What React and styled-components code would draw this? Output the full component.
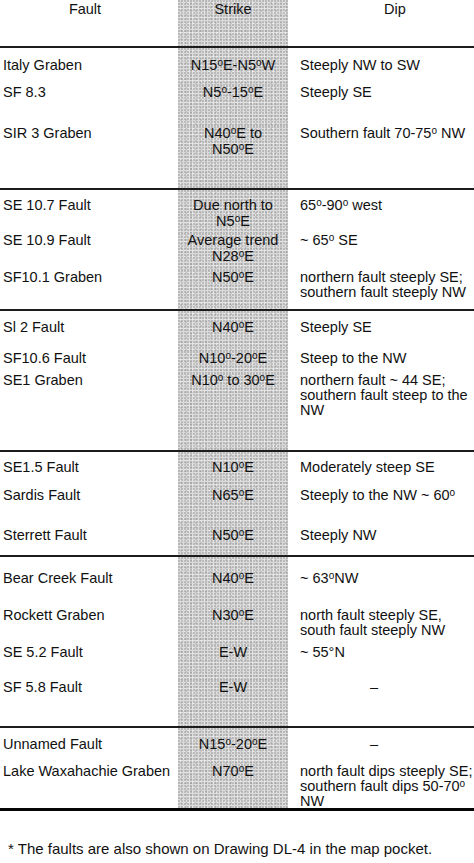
import React from 'react';
import styled, { createGlobalStyle } from 'styled-components';

const GlobalStyle = createGlobalStyle`
  html, body {
    margin: 0;
    padding: 0;
    background: #fff;
  }
  body {
    font-family: "Liberation Sans", Arial, Helvetica, sans-serif;
    color: #111;
  }
`;

// faults grouped the way the printed table separates them with rules
const groups = [
  {
    pt: 9.5,
    rows: [
      { h: 27, fault: 'Italy Graben', strike: ['N15^E-N5^W'], dip: ['Steeply NW to SW'] },
      { h: 41, fault: 'SF 8.3', strike: ['N5^-15^E'], dip: ['Steeply SE'] },
      { h: 62.5, fault: 'SIR 3 Graben', strike: ['N40^E to', 'N50^E'], dip: ['Southern fault 70-75^ NW'] },
    ],
  },
  {
    pt: 7.5,
    rows: [
      { h: 35, fault: 'SE 10.7 Fault', strike: ['Due north to', 'N5^E'], dip: ['65^-90^ west'] },
      { h: 37, fault: 'SE 10.9 Fault', strike: ['Average trend', 'N28^E'], dip: ['~ 65^ SE'] },
      {
        h: 39.5,
        fault: 'SF10.1 Graben',
        strike: ['N50^E'],
        dip: ['northern fault steeply SE;', 'southern fault steeply NW'],
      },
    ],
  },
  {
    pt: 8.5,
    rows: [
      { h: 31, fault: 'Sl 2 Fault', strike: ['N40^E'], dip: ['Steeply SE'] },
      { h: 22, fault: 'SF10.6 Fault', strike: ['N10^-20^E'], dip: ['Steep to the NW'] },
      {
        h: 77.5,
        fault: 'SE1 Graben',
        strike: ['N10^ to 30^E'],
        dip: ['northern fault ~ 44 SE;', 'southern fault steep to the', 'NW'],
      },
    ],
  },
  {
    pt: 7.5,
    rows: [
      { h: 28, fault: 'SE1.5  Fault', strike: ['N10^E'], dip: ['Moderately steep SE'] },
      { h: 40, fault: 'Sardis Fault', strike: ['N65^E'], dip: ['Steeply to the NW  ~ 60^'] },
      { h: 27.5, fault: 'Sterrett Fault', strike: ['N50^E'], dip: ['Steeply NW'] },
    ],
  },
  {
    pt: 13.5,
    rows: [
      { h: 37, fault: 'Bear Creek Fault', strike: ['N40^E'], dip: ['~ 63^NW'] },
      {
        h: 37,
        fault: 'Rockett Graben',
        strike: ['N30^E'],
        dip: ['north fault steeply SE,', 'south fault steeply NW'],
      },
      { h: 35, fault: 'SE 5.2 Fault', strike: ['E-W'], dip: ['~ 55°N'] },
      { h: 46.5, fault: 'SF 5.8 Fault', strike: ['E-W'], dash: true },
    ],
  },
  {
    pt: 8.5,
    rows: [
      { h: 27, fault: 'Unnamed Fault', strike: ['N15^-20^E'], dash: true },
      {
        h: 44.5,
        fault: 'Lake Waxahachie Graben',
        strike: ['N70^E'],
        dip: ['north fault dips steeply SE;', 'southern fault dips 50-70^', 'NW'],
      },
    ],
  },
];

// "^" marks the raised small "o" the print uses for degrees
const fmt = (text) =>
  text.split('^').map((part, i, all) => (
    <React.Fragment key={i}>
      {part}
      {i < all.length - 1 && <Deg>o</Deg>}
    </React.Fragment>
  ));

const App = () => {
  return (
    <Page>
      <GlobalStyle />
      <Table>
        <Row $h={46}>
          <HeadCell $pt={2} $pr={8}>Fault</HeadCell>
          <StrikeCell $pt={2}>Strike</StrikeCell>
          <HeadCell $pt={2} $pl={28}>Dip</HeadCell>
        </Row>
        <Rule $w={2} />
        {groups.map((group, gi) => (
          <React.Fragment key={gi}>
            {group.rows.map((row, ri) => {
              const pt = ri === 0 ? group.pt : 0;
              return (
                <Row key={row.fault} $h={row.h + pt}>
                  <FaultCell $pt={pt}>{row.fault}</FaultCell>
                  <StrikeCell $pt={pt}>
                    {row.strike.map((line) => (
                      <StrikeLine key={line}>{fmt(line)}</StrikeLine>
                    ))}
                  </StrikeCell>
                  <DipCell $pt={pt}>
                    {row.dash ? (
                      <Dash>–</Dash>
                    ) : (
                      row.dip.map((line) => <Line key={line}>{fmt(line)}</Line>)
                    )}
                  </DipCell>
                </Row>
              );
            })}
            <Rule $w={gi === groups.length - 1 ? 3 : 2} $dark={gi === groups.length - 1} />
          </React.Fragment>
        ))}
      </Table>
      <Footnote>* The faults are also shown on Drawing DL-4 in the map pocket.</Footnote>
    </Page>
  );
};

const Page = styled.div`
  width: 474px;
  height: 863px;
  overflow: hidden;
  font-size: 14.5px;
  line-height: 15px;
`;

const Table = styled.div`
  display: flex;
  flex-direction: column;
`;

const Row = styled.div`
  display: grid;
  grid-template-columns: 178px 110px 1fr;
  height: ${(p) => p.$h}px;
`;

const Cell = styled.div`
  padding-top: ${(p) => p.$pt || 0}px;
  white-space: nowrap;
`;

const HeadCell = styled(Cell)`
  text-align: center;
  padding-left: ${(p) => p.$pl || 0}px;
  padding-right: ${(p) => p.$pr || 0}px;
`;

const FaultCell = styled(Cell)`
  padding-left: 3px;
  overflow: hidden;
`;

// halftone screen of the printed strike column
const StrikeCell = styled(Cell)`
  text-align: center;
  background-color: #dcdcdc;
  background-image:
    radial-gradient(circle at 1px 1px, rgba(95, 95, 95, 0.38) 0.6px, transparent 1px),
    radial-gradient(circle at 2px 1px, rgba(140, 140, 140, 0.3) 0.7px, transparent 1.1px),
    radial-gradient(circle at 1px 2px, rgba(250, 250, 250, 0.6) 0.6px, transparent 1px);
  background-size: 3px 3px, 5px 4px, 4px 5px;
  background-position: 0 0, 1px 2px, 2px 1px;
`;

const DipCell = styled(Cell)`
  padding-left: 12px;
`;

const Line = styled.div``;

const StrikeLine = styled.div`
  line-height: 16px;
  margin-top: -0.5px;
`;

const Deg = styled.span`
  font-size: 10px;
  vertical-align: 4.5px;
  line-height: 0;
`;

const Dash = styled.span`
  display: inline-block;
  margin-left: 70px;
`;

const Rule = styled.div`
  height: ${(p) => p.$w}px;
  background: ${(p) => (p.$dark ? '#050505' : '#1c1c1c')};
`;

const Footnote = styled.div`
  margin-top: 29.5px;
  padding-left: 8px;
  font-size: 15px;
  white-space: nowrap;
`;

export default App;
